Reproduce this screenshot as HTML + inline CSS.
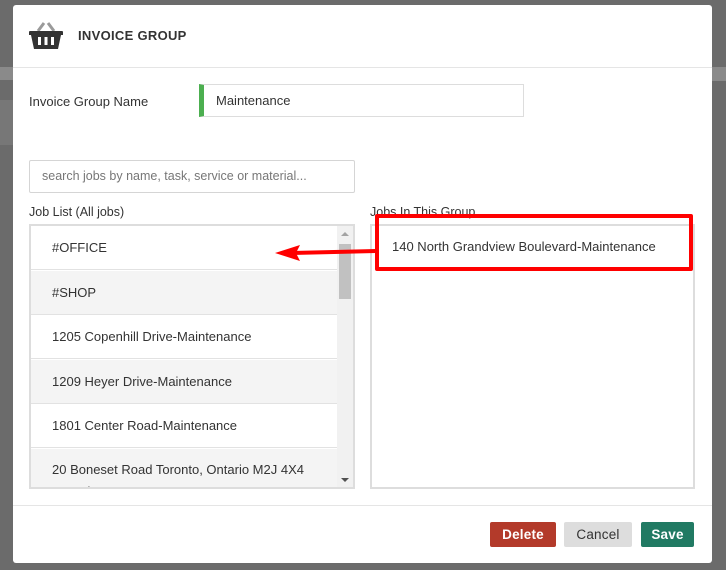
<!DOCTYPE html>
<html><head><style>
body{margin:0;width:726px;height:570px;background:#6b6b6b;position:relative;overflow:hidden;font-family:"Liberation Sans",sans-serif;color:#333}
.a{position:absolute}
.modal{left:13px;top:5px;width:699px;height:558px;background:#fff;border-radius:3px}
.item{position:absolute;left:0;width:306px;height:44px;border-bottom:1px solid #e2e2e2;font-size:13px;padding-left:21px;box-sizing:border-box;line-height:44px;color:#333}
.btn{position:absolute;top:522px;height:25px;line-height:25px;font-size:13.5px;font-weight:bold;text-align:center;border-radius:2px;letter-spacing:.2px}
</style></head><body>
<div class="a" style="left:0;top:67px;width:13px;height:13px;background:#8a8a8a"></div>
<div class="a" style="left:0;top:100px;width:13px;height:45px;background:#777"></div>
<div class="a" style="left:712px;top:67px;width:14px;height:14px;background:#8a8a8a"></div>
<div class="a modal"></div>
<svg class="a" style="left:28px;top:21px" width="36" height="29" viewBox="0 0 36 29">
<path d="M10 10 L16 2 M26 10 L20 2" stroke="#9a9a9a" stroke-width="3" fill="none"/>
<path d="M1 11 Q1 10 2 10 H34 Q35 10 35 11 V14 H33 L30 28 H6 L3 14 H1Z" fill="#333"/>
<rect x="10" y="16" width="3" height="8" fill="#fff"/><rect x="16.5" y="16" width="3" height="8" fill="#fff"/><rect x="23" y="16" width="3" height="8" fill="#fff"/>
</svg>
<div class="a" style="left:78px;top:28px;font-size:13px;font-weight:bold;color:#333;letter-spacing:.3px">INVOICE GROUP</div>
<div class="a" style="left:13px;top:67px;width:699px;height:1px;background:#e5e5e5"></div>
<div class="a" style="left:29px;top:94px;font-size:13px">Invoice Group Name</div>
<div class="a" style="left:199px;top:84px;width:325px;height:33px;border:1px solid #ddd;border-left:5px solid #4caf50;box-sizing:border-box;font-size:13px;line-height:31px;padding-left:12px">Maintenance</div>
<div class="a" style="left:29px;top:160px;width:326px;height:33px;border:1px solid #d5d5d5;box-sizing:border-box;border-radius:2px;font-size:12.5px;line-height:31px;padding-left:12px;color:#777">search jobs by name, task, service or material...</div>
<div class="a" style="left:29px;top:205px;font-size:12.5px">Job List (All jobs)</div>
<div class="a" style="left:370px;top:205px;font-size:12.5px">Jobs In This Group</div>
<div class="a" style="left:29px;top:224px;width:326px;height:265px;border:2px solid #ddd;box-sizing:border-box;overflow:hidden;background:#fff">
<div class="item" style="top:0;background:#fff">#OFFICE</div>
<div class="item" style="top:44.5px;background:#f4f4f4">#SHOP</div>
<div class="item" style="top:89px;background:#fff">1205 Copenhill Drive-Maintenance</div>
<div class="item" style="top:133.5px;background:#f4f4f4">1209 Heyer Drive-Maintenance</div>
<div class="item" style="top:178px;background:#fff">1801 Center Road-Maintenance</div>
<div class="item" style="top:222.5px;background:#f4f4f4;line-height:22px;padding-top:10px;height:80px">20 Boneset Road Toronto, Ontario M2J 4X4 Canada-M</div>
<div class="a" style="left:306px;top:0;width:16px;height:261px;background:#f1f1f1"></div>
<div class="a" style="left:308px;top:18px;width:12px;height:55px;background:#c1c1c1"></div>
<div class="a" style="left:310px;top:6px;width:0;height:0;border:4px solid transparent;border-bottom-color:#a3a3a3;border-top:0"></div>
<div class="a" style="left:310px;top:252px;width:0;height:0;border:4px solid transparent;border-top-color:#505050;border-bottom:0"></div>
</div>
<div class="a" style="left:370px;top:224px;width:325px;height:265px;border:2px solid #ddd;box-sizing:border-box;background:#fff"></div>
<div class="a" style="left:392px;top:239px;font-size:13px">140 North Grandview Boulevard-Maintenance</div>
<div class="a" style="left:375px;top:214px;width:318px;height:57px;border:4px solid #f00;box-sizing:border-box;border-radius:2px"></div>
<svg class="a" style="left:270px;top:240px" width="110" height="24"><path d="M106 11 L22 13" stroke="#f00" stroke-width="4"/><path d="M5 13 L30 5 L26 13 L30 21Z" fill="#f00"/></svg>
<div class="a" style="left:13px;top:505px;width:699px;height:1px;background:#e5e5e5"></div>
<div class="btn" style="left:490px;width:66px;background:#b33a2a;color:#fff">Delete</div>
<div class="btn" style="left:564px;width:68px;background:#ddd;color:#333;font-weight:normal">Cancel</div>
<div class="btn" style="left:641px;width:53px;background:#217a63;color:#fff">Save</div>
</body></html>
